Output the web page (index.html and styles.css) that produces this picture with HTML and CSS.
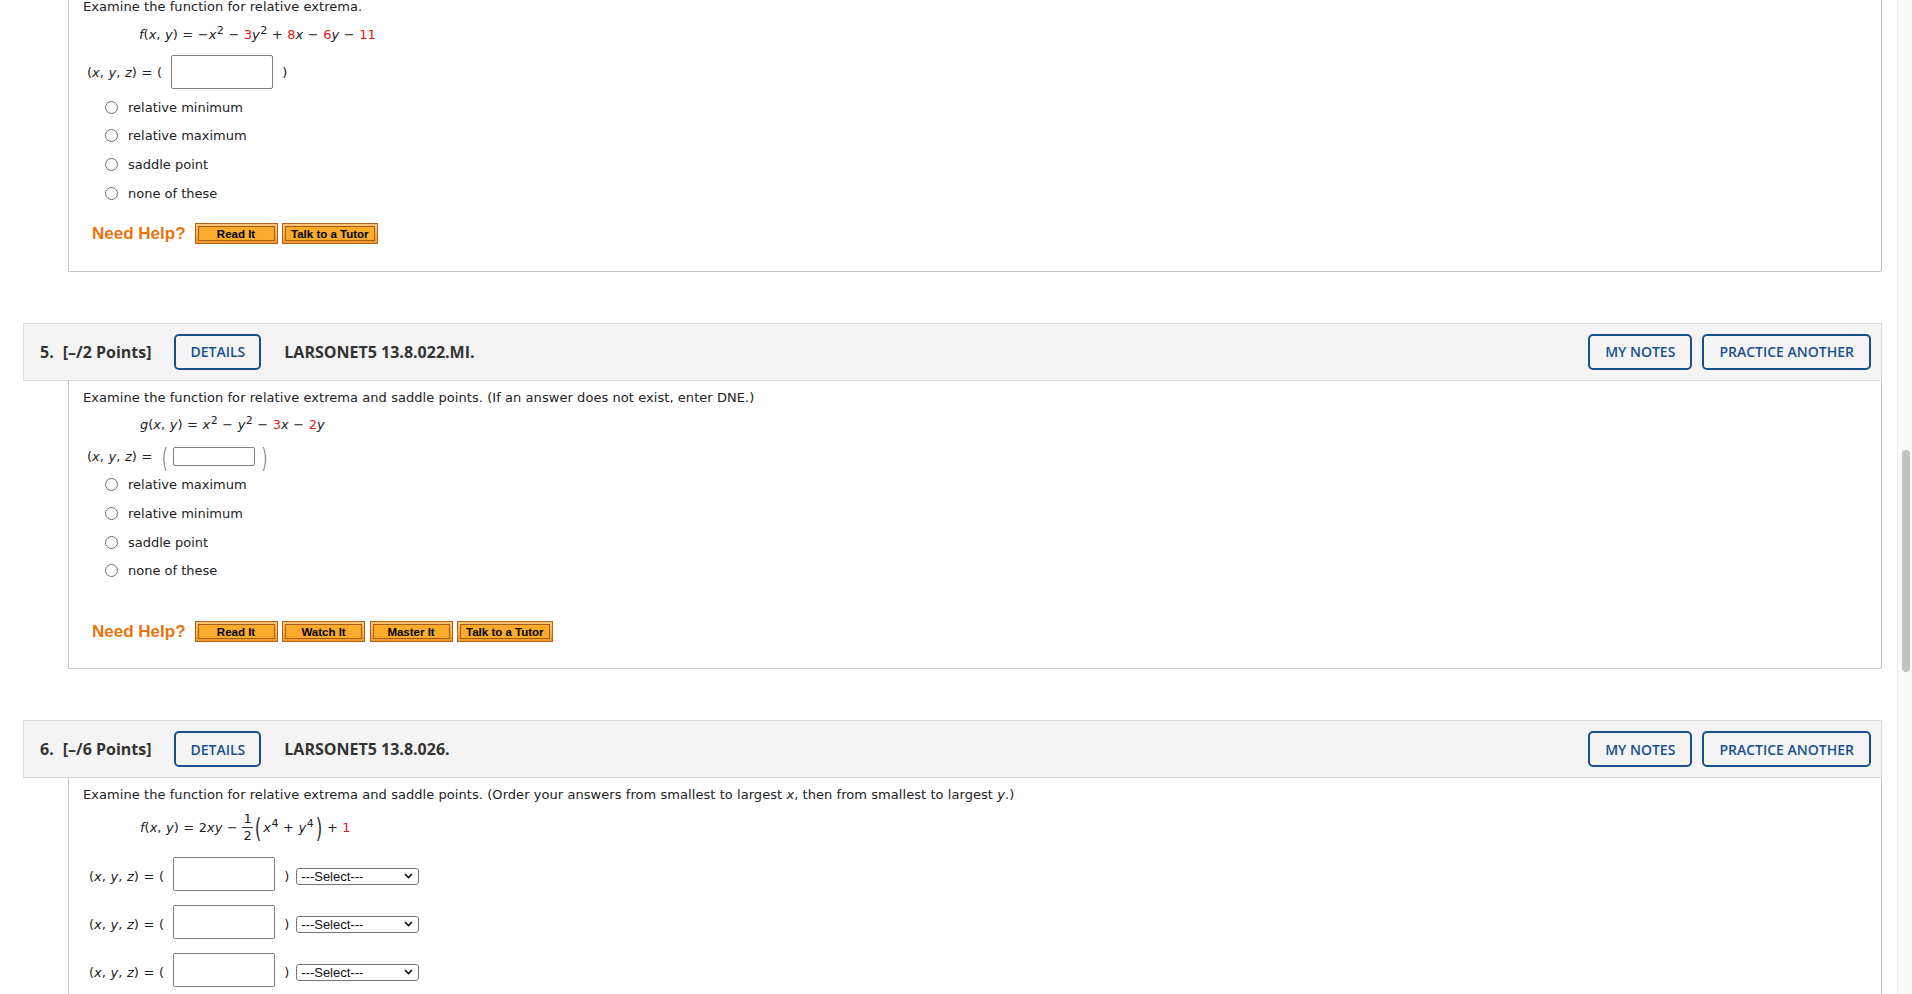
FILE: index.html
```html
<!DOCTYPE html>
<html lang="en">
<head>
<meta charset="utf-8">
<title>WebAssign</title>
<link rel="stylesheet" href="styles.css">
</head>
<body>
<div class="page">

  <section class="q">
    <div class="qbody qbody-first">
      <p class="prompt">Examine the function for relative extrema.</p>
      <div class="math math-a"><i>f</i>(<i>x</i>, <i>y</i>) = &minus;<i>x</i><sup>2</sup> &minus; <span class="red">3</span><i>y</i><sup>2</sup> + <span class="red">8</span><i>x</i> &minus; <span class="red">6</span><i>y</i> &minus; <span class="red">11</span></div>
      <div class="answer answer-lg"><span class="lbl">(<i>x</i>, <i>y</i>, <i>z</i>) = (</span><span class="input input-lg"></span><span class="cp">)</span></div>
      <div class="radios radios-a">
        <div class="radio"><span class="circle"></span><span class="rlabel">relative minimum</span></div>
        <div class="radio"><span class="circle"></span><span class="rlabel">relative maximum</span></div>
        <div class="radio"><span class="circle"></span><span class="rlabel">saddle point</span></div>
        <div class="radio"><span class="circle"></span><span class="rlabel">none of these</span></div>
      </div>
      <div class="help help-a">
        <span class="needhelp">Need Help?</span>
        <span class="obtn"><span>Read It</span></span>
        <span class="obtn"><span>Talk to a Tutor</span></span>
      </div>
    </div>
  </section>

  <section class="q">
    <header class="qhead">
      <span class="qnum">5.</span>
      <span class="qpts">[&ndash;/2 Points]</span>
      <span class="bbtn bbtn-details">DETAILS</span>
      <span class="qcode">LARSONET5 13.8.022.MI.</span>
      <span class="qactions">
        <span class="bbtn">MY NOTES</span>
        <span class="bbtn">PRACTICE ANOTHER</span>
      </span>
    </header>
    <div class="qbody">
      <p class="prompt">Examine the function for relative extrema and saddle points. (If an answer does not exist, enter DNE.)</p>
      <div class="math math-b"><i>g</i>(<i>x</i>, <i>y</i>) = <i>x</i><sup>2</sup> &minus; <i>y</i><sup>2</sup> &minus; <span class="red">3</span><i>x</i> &minus; <span class="red">2</span><i>y</i></div>
      <div class="answer answer-sm"><span class="lbl">(<i>x</i>, <i>y</i>, <i>z</i>) =</span><span class="tallp tallp-l">(</span><span class="input input-sm"></span><span class="tallp tallp-r">)</span></div>
      <div class="radios radios-b">
        <div class="radio"><span class="circle"></span><span class="rlabel">relative maximum</span></div>
        <div class="radio"><span class="circle"></span><span class="rlabel">relative minimum</span></div>
        <div class="radio"><span class="circle"></span><span class="rlabel">saddle point</span></div>
        <div class="radio"><span class="circle"></span><span class="rlabel">none of these</span></div>
      </div>
      <div class="help help-b">
        <span class="needhelp">Need Help?</span>
        <span class="obtn"><span>Read It</span></span>
        <span class="obtn"><span>Watch It</span></span>
        <span class="obtn"><span>Master It</span></span>
        <span class="obtn"><span>Talk to a Tutor</span></span>
      </div>
    </div>
  </section>

  <section class="q">
    <header class="qhead">
      <span class="qnum">6.</span>
      <span class="qpts">[&ndash;/6 Points]</span>
      <span class="bbtn bbtn-details">DETAILS</span>
      <span class="qcode">LARSONET5 13.8.026.</span>
      <span class="qactions">
        <span class="bbtn">MY NOTES</span>
        <span class="bbtn">PRACTICE ANOTHER</span>
      </span>
    </header>
    <div class="qbody">
      <p class="prompt">Examine the function for relative extrema and saddle points. (Order your answers from smallest to largest <i>x</i>, then from smallest to largest <i>y</i>.)</p>
      <div class="math math-c">
        <span><i>f</i>(<i>x</i>, <i>y</i>) = 2<i>xy</i> &minus;&nbsp;</span>
        <span class="frac"><span class="fnum">1</span><span class="fden">2</span></span>
        <span class="tallq tallq-l">(</span><span><i>x</i><sup>4</sup> + <i>y</i><sup>4</sup></span><span class="tallq tallq-r">)</span>
        <span>&nbsp;+ <span class="red">1</span></span>
      </div>
      <div class="rows6">
        <div class="answer answer-6"><span class="lbl">(<i>x</i>, <i>y</i>, <i>z</i>) = (</span><span class="input input-6"></span><span class="cp">)</span><span class="select">---Select---<svg class="chev" width="9" height="6" viewBox="0 0 9 6"><polyline points="1,1 4.5,4.5 8,1" fill="none" stroke="#111" stroke-width="1.7"/></svg></span></div>
        <div class="answer answer-6"><span class="lbl">(<i>x</i>, <i>y</i>, <i>z</i>) = (</span><span class="input input-6"></span><span class="cp">)</span><span class="select">---Select---<svg class="chev" width="9" height="6" viewBox="0 0 9 6"><polyline points="1,1 4.5,4.5 8,1" fill="none" stroke="#111" stroke-width="1.7"/></svg></span></div>
        <div class="answer answer-6"><span class="lbl">(<i>x</i>, <i>y</i>, <i>z</i>) = (</span><span class="input input-6"></span><span class="cp">)</span><span class="select">---Select---<svg class="chev" width="9" height="6" viewBox="0 0 9 6"><polyline points="1,1 4.5,4.5 8,1" fill="none" stroke="#111" stroke-width="1.7"/></svg></span></div>
      </div>
    </div>
  </section>

</div>
<div class="scrollbar"><div class="thumb"></div></div>
</body>
</html>
```

FILE: styles.css
```css
html, body {
  margin: 0;
  padding: 0;
  height: 100%;
  overflow: hidden;
  background: #fff;
}
body {
  font-family: "DejaVu Sans", Verdana, sans-serif;
  font-size: 13px;
  color: #222;
}
.page {
  padding-left: 23px;
  width: 1859px;
}
.q + .q {
  margin-top: 51px;
}

/* header */
.qhead {
  box-sizing: border-box;
  height: 58px;
  border: 1px solid #d9d9d9;
  background: #f4f4f4;
  display: flex;
  align-items: center;
  padding: 0 10px 0 16px;
  font-family: "Open Sans", sans-serif;
  font-weight: 700;
  font-size: 16px;
  color: #333;
}
.qnum { margin-right: 9px; }
.qpts { margin-right: 23px; }
.qcode { margin-left: 23px; }
.qactions {
  margin-left: auto;
  display: flex;
  gap: 10px;
}
.bbtn {
  box-sizing: border-box;
  height: 36px;
  border: 2px solid #18508e;
  border-radius: 5px;
  padding: 0 15px;
  display: flex;
  align-items: center;
  font-family: "Open Sans", sans-serif;
  font-size: 14px;
  font-weight: 600;
  color: #18508e;
}
.bbtn-details { padding: 0 14px; }

/* body */
.qbody {
  margin-left: 45px;
  border: 1px solid #c6c6c6;
  border-top: none;
  border-radius: 0 0 3px 0;
  padding: 9px 14px 26px 14px;
}
.qbody-first {
  margin-top: -10px;
  padding-bottom: 26.5px;
}
.prompt {
  margin: 0;
  line-height: 16px;
  letter-spacing: 0.06px;
}
.red { color: #e4161b; }
.math {
  line-height: 16px;
  margin-left: 56px;
  word-spacing: 0.4px;
}
.math-a { margin-top: 12px; }
.math-b { margin-top: 11px; margin-left: 57px; }
.math sup {
  font-size: 11px;
  line-height: 0;
  vertical-align: 5px;
  margin-left: 0.5px;
}

/* answer rows */
.answer {
  display: flex;
  align-items: center;
}
.answer-lg {
  margin-top: 12px;
  height: 34px;
  padding-left: 4px;
}
.answer-sm {
  margin-top: 11px;
  height: 26px;
  padding-left: 4px;
}
.lbl { word-spacing: 0.5px; }
.input {
  box-sizing: border-box;
  display: block;
  border: 1px solid #808080;
  border-radius: 2px;
  background: #fff;
}
.input-lg {
  width: 102px;
  height: 34px;
  margin-left: 9px;
}
.input-sm {
  width: 82px;
  height: 19px;
}
.cp { margin-left: 9px; }
.tallp {
  display: inline-block;
  font-size: 17px;
  font-weight: 200;
  color: #555;
  transform: scaleY(1.6);
}
.tallp-l { margin: 0 5px 0 9px; }
.tallp-r { margin-left: 6px; }

/* radios */
.radios-a { margin-top: 4px; }
.radios-b { margin-top: 1px; }
.radio {
  height: 28.67px;
  display: flex;
  align-items: center;
  padding-left: 21.5px;
}
.circle {
  box-sizing: border-box;
  width: 13px;
  height: 13px;
  border: 1px solid #6f6f6f;
  border-radius: 50%;
  background: #fff;
  margin-right: 10.5px;
}

/* need help */
.help {
  display: flex;
  align-items: center;
  gap: 4.5px;
  height: 21px;
  padding-left: 9px;
}
.help-a { margin-top: 15.5px; }
.help-b { margin-top: 36px; }
.needhelp {
  font-family: "Liberation Sans", Arial, sans-serif;
  font-size: 17px;
  font-weight: 700;
  color: #e8740d;
  margin-right: 4.5px;
}
.obtn {
  box-sizing: border-box;
  display: flex;
  height: 21px;
  min-width: 83px;
  border: 1px solid #b5611a;
  background: linear-gradient(#fbc77a, #f39a2a);
  padding: 2px;
}
.obtn span {
  flex: 1;
  display: flex;
  align-items: center;
  justify-content: center;
  border: 1px solid #a85d17;
  background: #f9ab2b;
  padding: 0 5px;
  font-family: "Liberation Sans", Arial, sans-serif;
  font-size: 11.5px;
  font-weight: 700;
  color: #000;
}

/* question 6 */
.math-c {
  display: flex;
  align-items: center;
  height: 32px;
  margin-top: 9px;
  margin-left: 57px;
  line-height: 16px;
}
.frac {
  display: inline-flex;
  flex-direction: column;
  align-items: center;
  font-size: 13px;
  line-height: 14px;
  margin-top: -2px;
}
.fnum {
  border-bottom: 1px solid #333;
  padding: 0 1px 1px;
}
.fden { padding-top: 1px; }
.tallq {
  display: inline-block;
  font-size: 17px;
  color: #333;
  transform: scaleY(1.55);
}
.tallq-l { margin: 0 2px 0 2px; }
.tallq-r { margin: 0 0 0 2px; }
.rows6 { margin-top: 8px; }
.answer-6 {
  height: 48px;
  padding-left: 6px;
}
.input-6 {
  width: 102px;
  height: 34px;
  margin-left: 9px;
  margin-bottom: 5px;
}
.select {
  box-sizing: border-box;
  width: 123px;
  height: 17px;
  margin-left: 7px;
  border: 1px solid #767676;
  border-radius: 3px;
  display: flex;
  align-items: center;
  justify-content: space-between;
  padding: 0 5px 0 4px;
  font-family: "Liberation Sans", Arial, sans-serif;
  font-size: 13px;
  color: #111;
  background: #fff;
}

/* scrollbar */
.scrollbar {
  position: fixed;
  top: 0;
  right: 0;
  width: 14px;
  height: 100%;
  background: #f9f9f9;
  border-left: 1px solid #ebebeb;
}
.thumb {
  position: absolute;
  top: 450px;
  left: 4px;
  width: 8px;
  height: 222px;
  border-radius: 4px;
  background: #c1c1c1;
}
```
